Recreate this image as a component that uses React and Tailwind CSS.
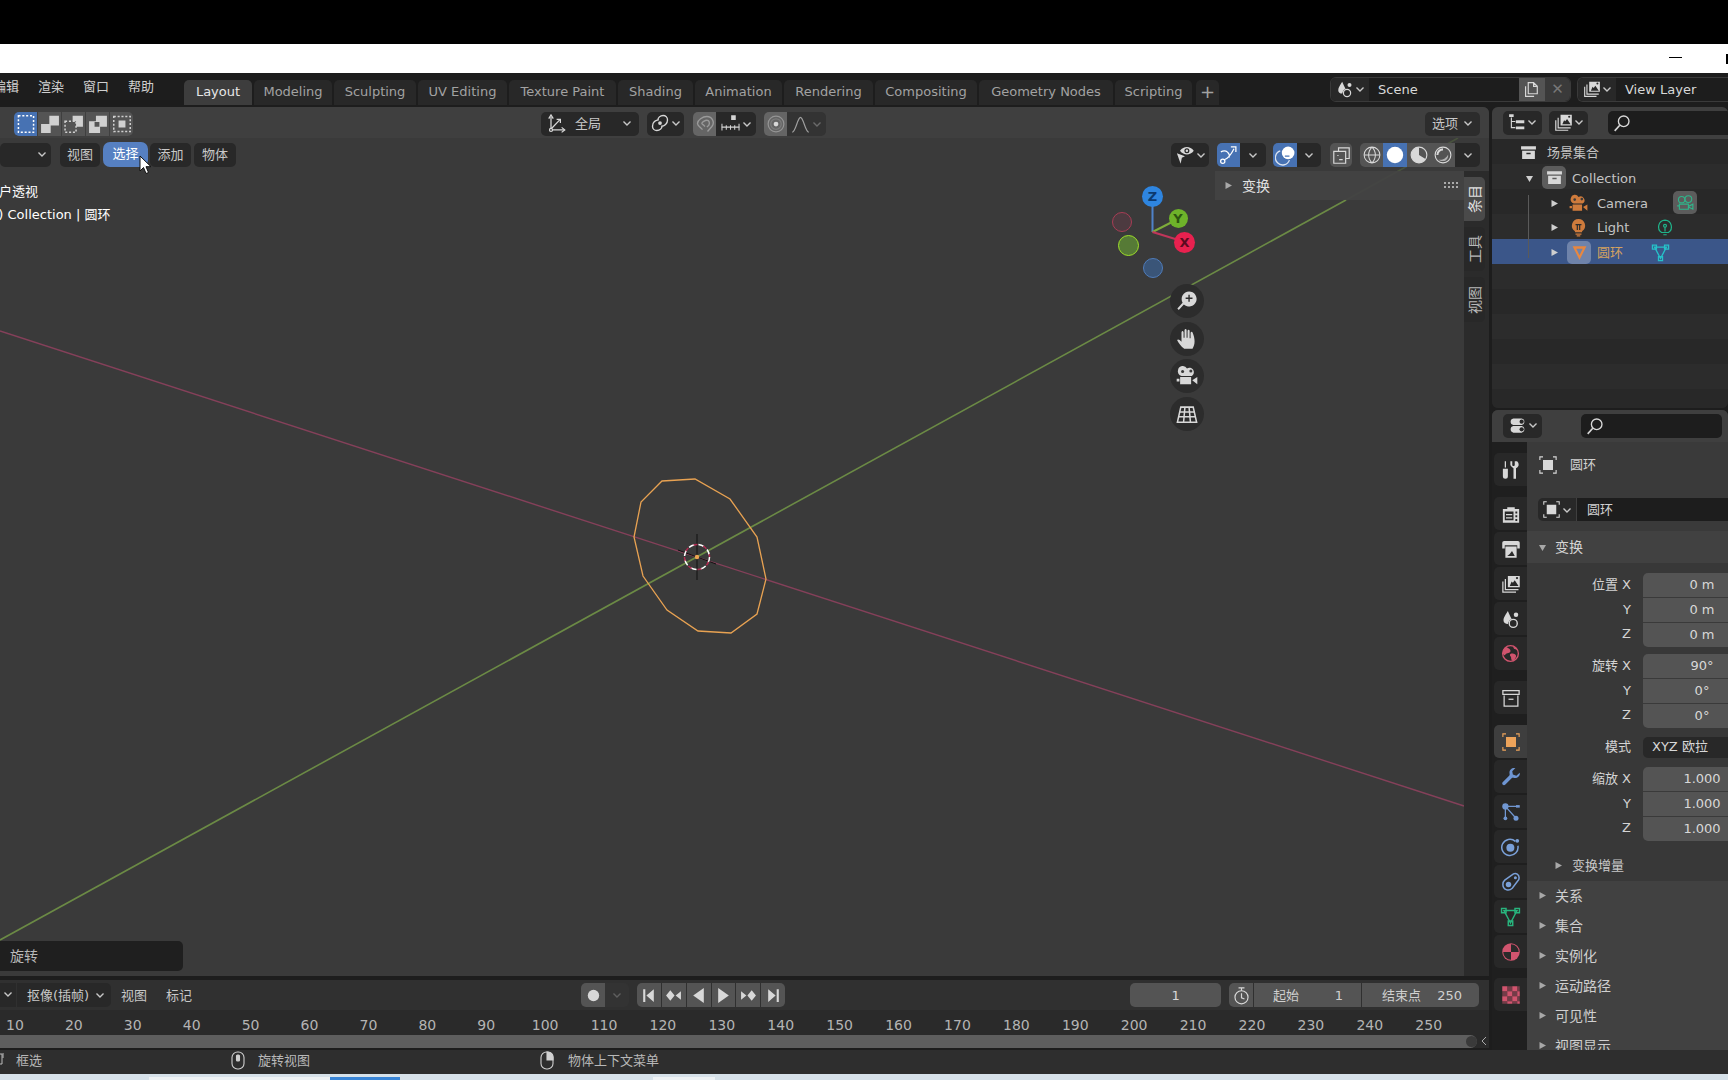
import React from "react";

const Chev = ({ className = "text-[#c8c8c8]" }) => (
  <svg width="10" height="10" viewBox="0 0 10 10" className={`shrink-0 ${className}`} fill="none" stroke="currentColor" strokeWidth="1.400">
    <path d="M1.500 3.500 5 7l3.500-3.500" />
  </svg>
);

const Tri = ({ down, className = "text-[#a8a8a8]" }) => (
  <svg width="9" height="9" viewBox="0 0 9 9" className={`shrink-0 ${className}`} fill="currentColor">
    {down ? <path d="M1 2h7L4.500 8z" /> : <path d="M1.500 1 8 4.500 1.500 8z" />}
  </svg>
);

const Ico = ({ size = 18, className = "text-[#d8d8d8]", children }) => (
  <svg width={size} height={size} viewBox="0 0 16 16" className={`shrink-0 ${className}`} fill="currentColor">
    {children}
  </svg>
);

const Search = ({ size = 18 }) => (
  <Ico size={size}>
    <circle cx="9.500" cy="6.500" r="4.700" fill="none" stroke="currentColor" strokeWidth="1.200" />
    <path d="M6 10 1.500 15" stroke="currentColor" strokeWidth="1.400" />
  </Ico>
);

const SceneIcon = ({ size = 18 }) => (
  <Ico size={size}>
    <path d="M5.500 1.500C3.500 5 2 6.500 2 9c0 2 1.500 3 3.500 3 .5-2 1.500-3.500 3-4C7.500 6 6.500 4 5.500 1.500z" />
    <circle cx="12" cy="4.500" r="1.800" />
    <circle cx="9.800" cy="11.500" r="3.200" fill="none" stroke="currentColor" strokeWidth="1.100" />
  </Ico>
);

const LayerIcon = ({ size = 18 }) => (
  <Ico size={size}>
    <path d="M1.500 6v8.500H12" fill="none" stroke="currentColor" />
    <path d="M3.500 4v8.500H14" fill="none" stroke="currentColor" />
    <path d="M5.500 1.500H15v9H5.500zM7 9.500h7L11 5l-1.500 2L8.500 6z" fillRule="evenodd" />
    <circle cx="12.800" cy="3.200" r="0.900" fill="#282828" />
  </Ico>
);

const OutlinerMode = () => (
  <Ico size={18}>
    <path d="M1 1h4v2.500H1zM7 6.500h7.500V9H7zM7 12h7.500v2.500H7z" />
    <path d="M3 4v9h3.500M3 7.500h3.500" fill="none" stroke="currentColor" />
  </Ico>
);

const Box = ({ size = 18, className }) => (
  <Ico size={size} className={className ?? "text-[#d8d8d8]"}>
    <path d="M1 2h14v3.200H1zM2 6.300h12V14H2zM6 8.300v1.400h4V8.300z" fillRule="evenodd" />
  </Ico>
);

const CameraIcon = ({ size = 18, className, outline }) => (
  <Ico size={size} className={className}>
    {outline ? (
      <g fill="none" stroke="currentColor">
        <circle cx="5" cy="5" r="2.800" />
        <circle cx="11" cy="4.500" r="3" />
        <path d="M3 9h8v4.500H3zM11 11l4-2v4.500l-4-2M1 10.500h2" />
      </g>
    ) : (
      <g>
        <path d="M1.500 3.500a3.500 3.500 0 0 1 6.500-1 3.200 3.200 0 1 1 3.500 5.500H4A3.500 3.500 0 0 1 1.500 3.500z" />
        <path d="M3 8.800h8v5.200H3zM11.800 11l3.700-2.200v5.200zM.5 10h2v2h-2z" />
        <circle cx="4.800" cy="4.700" r="1.100" fill="#3a3a3a" />
        <circle cx="10.800" cy="4.300" r="1.100" fill="#3a3a3a" />
      </g>
    )}
  </Ico>
);

const LightIcon = ({ size = 18, className }) => (
  <Ico size={size} className={className}>
    <path d="M8 .8a5.600 5.600 0 0 1 3 10.300V12H5v-.9A5.600 5.600 0 0 1 8 .8zM5.500 13h5v1h-5zM6.500 14.600h3v1h-3z" />
    <path d="M5.500 5.500h5M7 5.500V10M9 5.500V10" stroke="#2a2a2a" fill="none" />
  </Ico>
);

const MeshIcon = ({ size = 18, className }) => (
  <Ico size={size} className={className}>
    <g fill="none" stroke="currentColor" strokeWidth="1.100">
      <path d="M3 3.500h10L8 13z" />
      <path d="M1.200 1.800h3.400v3.400H1.200zM11.400 1.800h3.400v3.400h-3.400zM6.300 11.400h3.400v3.400H6.300z" />
    </g>
  </Ico>
);

const ObjectFrame = ({ size = 20, className = "text-[#d8d8d8]" }) => (
  <Ico size={size} className={className}>
    <path d="M4 4h8v8H4z" />
    <path d="M4 1.500H1.500V4M12 1.500h2.500V4M4 14.500H1.500V12M12 14.500h2.500V12" fill="none" stroke="currentColor" strokeWidth="0.900" />
  </Ico>
);

const GroupBtn = ({ active, dim, light, className = "", children }) => (
  <div className={`flex items-center justify-center h-full ${active ? "bg-[#4772b3]" : dim ? "bg-[#282828]" : light ? "bg-[#656565]" : "bg-[#545454]"} ${className}`}>{children}</div>
);

const Tab = ({ className, active, children }) => (
  <div className={`h-full shrink-0 flex items-center justify-center rounded-t-[5px] pb-[2px] ${active ? "bg-[#3d3d3d] text-[#e6e6e6]" : "bg-[#282828] text-[#a2a2a2]"} ${className}`}>{children}</div>
);

const Dd = ({ className = "", tone = "bg-[#282828] text-[#c8c8c8]", children }) => (
  <div className={`h-[24px] shrink-0 rounded-[5px] flex items-center pb-[2px] ${tone} ${className}`}>{children}</div>
);

const TopBar = () => (
  <div className="h-[34px] shrink-0 bg-[#1d1d1d] flex items-center overflow-hidden">
    <div className="flex shrink-0 -ml-[7px] w-[191px] gap-[19px] text-[#d0d0d0] -mt-[7px]">
      <span>编辑</span>
      <span>渲染</span>
      <span>窗口</span>
      <span>帮助</span>
    </div>
    <div className="flex gap-[2px] h-[25px] mt-[7px] self-start shrink-0">
      <Tab active className="w-[68px]">Layout</Tab>
      <Tab className="w-[78px]">Modeling</Tab>
      <Tab className="w-[82px]">Sculpting</Tab>
      <Tab className="w-[89px]">UV Editing</Tab>
      <Tab className="w-[107px]">Texture Paint</Tab>
      <Tab className="w-[75px]">Shading</Tab>
      <Tab className="w-[87px]">Animation</Tab>
      <Tab className="w-[89px]">Rendering</Tab>
      <Tab className="w-[102px]">Compositing</Tab>
      <Tab className="w-[134px]">Geometry Nodes</Tab>
      <Tab className="w-[77px]">Scripting</Tab>
      <Tab className="w-[23px] ml-[2px] text-[18px]">+</Tab>
    </div>
    <div className="ml-[111px] flex h-[25px] shrink-0 -mt-[2px] rounded-[6px] overflow-hidden border border-[#3a3a3a]">
      <div className="w-[38px] bg-[#282828] flex items-center justify-center gap-[1px]">
        <SceneIcon size={18} />
        <Chev />
      </div>
      <div className="w-[150px] bg-[#1d1d1d] text-[#d8d8d8] flex items-center pl-[9px]">Scene</div>
      <div className="w-[26px] bg-[#545454] flex items-center justify-center">
        <Ico size={17}>
          <path d="M4 1.500h5l3.500 3.500v7H4zM9 1.500V5h3.500M1.500 5v9.500h8" fill="none" stroke="currentColor" strokeWidth="1.100" />
        </Ico>
      </div>
      <div className="w-[25px] bg-[#3a3a3a] flex items-center justify-center text-[#777] text-[15px]">✕</div>
    </div>
    <div className="ml-[6px] flex h-[25px] shrink-0 -mt-[2px] rounded-l-[6px] overflow-hidden border border-[#3a3a3a] border-r-0">
      <div className="w-[38px] bg-[#282828] flex items-center justify-center gap-[1px]">
        <LayerIcon size={18} />
        <Chev />
      </div>
      <div className="w-[116px] bg-[#1d1d1d] text-[#d8d8d8] flex items-center pl-[9px]">View Layer</div>
    </div>
  </div>
);

const Dotted = ({ x = 3, y = 2, w = 10, h = 12 }) => (
  <rect x={x} y={y} width={w} height={h} fill="none" stroke="currentColor" strokeWidth="1.100" strokeDasharray="1.500 1.300" />
);

const ViewportHeader = () => (
  <div className="h-[31px] shrink-0 bg-[#3f3f3f] flex items-start pt-[5px]">
    <div className="ml-[14px] flex w-[119px] h-[24px] rounded-[5px] overflow-hidden gap-px bg-[#3f3f3f] shrink-0">
      <GroupBtn active className="flex-1">
        <Ico size={22} className="text-white"><Dotted x={2.500} y={2} w={11} h={12} /></Ico>
      </GroupBtn>
      <GroupBtn className="flex-1">
        <Ico size={22} className="text-[#d0d0d0]"><path d="M1.500 8h6V2h7v7h-6v5.500h-7z" /></Ico>
      </GroupBtn>
      <GroupBtn className="flex-1">
        <Ico size={22} className="text-[#d0d0d0]"><Dotted x={1.500} y={6} w={8} h={8} /><path d="M7 2h7.500v8H9.500V6H7z" /></Ico>
      </GroupBtn>
      <GroupBtn className="flex-1">
        <Ico size={22} className="text-[#d0d0d0]"><path d="M6.500 2h8v8h-5v4.500h-8V6h5zM5.500 6.500v3.500h3.500V6.500z" fillRule="evenodd" /></Ico>
      </GroupBtn>
      <GroupBtn className="flex-1">
        <Ico size={22} className="text-[#d0d0d0]"><Dotted x={2} y={2.500} w={12} h={11} /><path d="M5.500 5.500h5v5h-5z" /></Ico>
      </GroupBtn>
    </div>
    <Dd className="ml-[408px] w-[98px] pl-[5px] pr-[7px]">
      <Ico size={20}>
        <g fill="none" stroke="currentColor" strokeWidth="1">
          <path d="M4 3v9.500M5.200 13.500H14.500M4.800 12 11 5.500" />
          <path d="M2.200 4.500 4 1.500l1.800 3M12.500 11.500l2.500 2-2.500 2M8.500 5h3v3" />
          <circle cx="4" cy="13.500" r="1.200" />
        </g>
      </Ico>
      <span className="ml-[9px]">全局</span>
      <span className="ml-auto"><Chev /></span>
    </Dd>
    <Dd className="ml-[8px] w-[37px] justify-center gap-[1px]">
      <Ico size={20}>
        <g fill="none" stroke="currentColor" strokeWidth="1.100">
          <path d="M7 5.500C4.500 5.500 2 7.500 2 10.500c0 2 1.500 3.500 3.500 3.500 2.500 0 4-2 4.200-3.500" />
          <path d="M9 10.500c2.500 0 5-2 5-5 0-2-1.500-3.500-3.500-3.500C8 2 6.500 4 6.300 5.500" />
        </g>
        <circle cx="8" cy="8" r="1.500" />
      </Ico>
      <Chev />
    </Dd>
    <div className="ml-[9px] flex w-[63px] h-[24px] rounded-[5px] overflow-hidden shrink-0">
      <GroupBtn light className="w-[23px]">
        <Ico size={20} className="text-[#9a9a9a]">
          <g fill="none" stroke="currentColor" strokeWidth="1.100">
            <path d="M10 14 13.500 10C16 7 14 2 9.500 2 6 2 2 5 2 7.500 2 9 3 9.500 4.500 11L6 12.500" />
            <path d="M9.500 10.500 11 9C12 7.500 11.500 5 9.500 5 8 5 5.500 6.500 5.500 7.500c0 .5 1 1 1.500 1.500L8 10" />
          </g>
        </Ico>
      </GroupBtn>
      <GroupBtn dim className="flex-1 gap-[1px]">
        <Ico size={21} className="text-[#d4d4d4]">
          <path d="M8.500 1h3.500v3.500H8.500z" />
          <path d="M1 10h14M1.500 7.500v5M4.800 8.500v3.500M8 8.500v3.500M11.200 8.500v3.500M14.500 7.500v5" fill="none" stroke="currentColor" strokeWidth="0.800" />
        </Ico>
        <Chev />
      </GroupBtn>
    </div>
    <div className="ml-[8px] flex w-[62px] h-[24px] rounded-[5px] overflow-hidden shrink-0">
      <GroupBtn light className="w-[23px]">
        <Ico size={20} className="text-[#a8a8a8]">
          <circle cx="8" cy="8" r="6.300" fill="none" stroke="currentColor" strokeOpacity="0.700" />
          <circle cx="8" cy="8" r="4.200" fill="none" stroke="currentColor" strokeOpacity="0.350" />
          <circle cx="8" cy="8" r="1.900" className="text-[#d8d8d8]" />
        </Ico>
      </GroupBtn>
      <div className="flex-1 bg-[#333333] flex items-center justify-center gap-[2px]">
        <Ico size={19} className="text-[#a0a0a0]">
          <path d="M1 14.500C4 14.500 5.500 2 8 2s4 12.500 7 12.500" fill="none" stroke="currentColor" strokeWidth="1" />
        </Ico>
        <Chev className="text-[#6a6a6a]" />
      </div>
    </div>
    <Dd tone="bg-[#2c2c2c] text-[#c8c8c8]" className="ml-auto mr-[9px] w-[55px] justify-center gap-[5px]">
      <span>选项</span>
      <Chev />
    </Dd>
  </div>
);

const ViewportTools = () => (
  <div className="h-[33px] relative flex items-start pt-[5px] shrink-0">
    <Dd className="w-[51px] justify-end pr-[4px]"><Chev /></Dd>
    <Dd className="ml-[9px] w-[40px] justify-center">视图</Dd>
    <Dd tone="bg-[#5680c2] text-white" className="ml-[3px] w-[45px] justify-center h-[25px] -mt-[1px] rounded-[7px]">选择</Dd>
    <Dd className="ml-[2px] w-[41px] justify-center">添加</Dd>
    <Dd className="ml-[3px] w-[42px] justify-center">物体</Dd>
    <div className="ml-auto mr-[9px] flex items-start h-[24px] shrink-0">
      <div className="w-[38px] h-[24px] rounded-[5px] bg-[#282828] flex items-center justify-center gap-[1px]">
        <Ico size={20}>
          <path d="M1.500 6.500 8 9 5.500 10.200 4.500 15z" />
          <path d="M4 4.500C5.500 2.500 7.500 1.500 9.500 1.500s4 1 5.500 3c-1.500 2-3.500 3-5.500 3S5.500 6.500 4 4.500z" />
          <circle cx="9.500" cy="4.500" r="2" fill="#282828" />
          <circle cx="9.500" cy="4.500" r="1" />
        </Ico>
        <Chev />
      </div>
      <div className="ml-[8px] flex w-[49px] h-[24px] rounded-[5px] overflow-hidden">
        <GroupBtn active className="w-[23px]">
          <Ico size={20} className="text-white">
            <g fill="none" stroke="currentColor" strokeWidth="1">
              <circle cx="3" cy="13" r="1.700" />
              <path d="M4.200 11.800C7 11 10 7 12 3M1.500 5.500C6 3 9 7 8 10M9.500 1.500h4v4" />
            </g>
          </Ico>
        </GroupBtn>
        <GroupBtn dim className="flex-1"><Chev /></GroupBtn>
      </div>
      <div className="ml-[7px] flex w-[48px] h-[24px] rounded-[5px] overflow-hidden">
        <GroupBtn active className="w-[24px]">
          <Ico size={21} className="text-white">
            <path d="M4 4.500a5.500 5.500 0 1 0 7 7" fill="none" stroke="currentColor" strokeWidth="1" strokeOpacity="0.800" />
            <circle cx="10" cy="6" r="4.800" />
            <path d="M7.500 8.500h3.500" stroke="#4772b3" fill="none" />
          </Ico>
        </GroupBtn>
        <GroupBtn dim className="flex-1"><Chev /></GroupBtn>
      </div>
      <div className="ml-[9px] w-[22px] h-[24px] rounded-[5px] bg-[#545454] flex items-center justify-center">
        <Ico size={19}>
          <path d="M5.500 4.500V1.500H14.500V10.500H11.500M1.500 4.500h10v10h-10z" fill="none" stroke="currentColor" />
          <path d="M4.500 7.500h1v1h-1zM6 11h3v1H6z" />
        </Ico>
      </div>
      <div className="ml-[8px] flex w-[120px] h-[24px] rounded-[5px] overflow-hidden">
        <GroupBtn className="w-[23px]">
          <Ico size={18}>
            <g fill="none" stroke="currentColor" strokeWidth="0.900">
              <circle cx="8" cy="8" r="7" />
              <path d="M1 8h14M8 1c-4 4-4 10 0 14M8 1c4 4 4 10 0 14" />
            </g>
          </Ico>
        </GroupBtn>
        <GroupBtn active className="w-[24px]">
          <Ico size={18} className="text-white"><circle cx="8" cy="8" r="7.300" /></Ico>
        </GroupBtn>
        <GroupBtn className="w-[24px]">
          <Ico size={18}>
            <circle cx="8" cy="8" r="7" fill="none" stroke="currentColor" />
            <path d="M8 1v7l5.800 3.500A7 7 0 0 1 8 15 7 7 0 0 1 8 1z" />
          </Ico>
        </GroupBtn>
        <GroupBtn className="w-[24px]">
          <Ico size={18}>
            <circle cx="8" cy="8" r="7" fill="none" stroke="currentColor" />
            <path d="M3 8a5 5 0 0 1 5-5" fill="none" stroke="currentColor" strokeWidth="1.800" />
            <path d="M4 12c3 1 7-1 8.500-4.500.5 2-.5 4.500-2.500 5.500-2 .8-4.500.5-6-1z" fillOpacity="0.700" />
          </Ico>
        </GroupBtn>
        <GroupBtn dim className="flex-1"><Chev /></GroupBtn>
      </div>
    </div>
  </div>
);

const Dot = ({ className, children }) => (
  <div className={`absolute rounded-full flex items-center justify-center text-[13px] font-bold leading-none ${className}`}>{children}</div>
);

const NavBtn = ({ children }) => (
  <div className="w-[34px] h-[34px] rounded-full bg-[#2c2c2c] flex items-center justify-center">{children}</div>
);

const SideTab = ({ active, className = "", children }) => (
  <div className={`w-[21px] rounded-r-[5px] flex items-center justify-center text-[14px] ${active ? "bg-[#4a4a4a] text-[#e0e0e0]" : "bg-[#282828] text-[#b8b8b8]"} ${className}`}>
    <span className="-rotate-90 whitespace-nowrap">{children}</span>
  </div>
);

const Scene3D = () => (
  <svg className="absolute left-0 top-0" width="1489" height="838" viewBox="0 138 1489 838" fill="none">
    <path d="M0 331 1464 806" stroke="#85405a" strokeWidth="1.400" />
    <path d="M0 940 1346 200" stroke="#6b8a45" strokeWidth="1.600" />
    <path d="M1346 200 1458 138" stroke="#6b8a45" strokeWidth="1.600" strokeOpacity="0.300" />
    <path
      d="M662 481 695 479 730 499 757 537 766 579 757 614 731 633 698 631 667 610 643 576 634 537 641 502Z"
      stroke="#e8a252"
      strokeWidth="1.300"
    />
    <path d="M697 534V580M678 550 716 564" stroke="#111" strokeWidth="1" />
    <circle cx="697" cy="557" r="12.500" stroke="#fff" strokeWidth="1.500" strokeDasharray="6 4" />
    <circle cx="697" cy="557" r="12.500" stroke="#b02a50" strokeWidth="1.500" strokeDasharray="4 6" strokeDashoffset="5" />
    <circle cx="697" cy="557" r="2.200" fill="#eda551" />
  </svg>
);

const Viewport = () => (
  <div className="h-[869px] shrink-0 flex flex-col bg-[#3a3a3a] rounded-tr-[6px] overflow-hidden">
    <ViewportHeader />
    <div className="flex-1 relative flex flex-col overflow-hidden">
      <Scene3D />
      <ViewportTools />
      <svg className="absolute left-[139px] top-[17px]" width="14" height="20" viewBox="0 0 14 20">
        <path d="M1 1v15l3.500-3.500 2.500 6 2.500-1-2.500-5.800h5z" fill="#fff" stroke="#111" strokeWidth="1" />
      </svg>
      <div className="flex-1 flex relative min-h-0">
        <div className="flex-1 relative">
          <div className="mt-[9px] -ml-[14px] text-white text-[13px] leading-[23px]">
            <div>用户透视</div>
            <div className="-ml-[1px]">(1) Collection | 圆环</div>
          </div>
          <div className="absolute left-[1215px] top-0 w-[249px] h-[29px] bg-[#444444]/90 flex items-center pl-[9px] text-[#e0e0e0] text-[14px]">
            <Tri />
            <span className="ml-[9px]">变换</span>
            <svg width="15" height="7" viewBox="0 0 15 7" className="ml-auto mr-[5px] text-[#aaa]" fill="currentColor">
              <path d="M0 0h2v2H0zM4 0h2v2H4zM8 0h2v2H8zM12 0h2v2h-2zM0 4h2v2H0zM4 4h2v2H4zM8 4h2v2H8zM12 4h2v2h-2z" />
            </svg>
          </div>
          <svg className="absolute left-[1110px] top-[13px]" width="90" height="110" viewBox="1110 184 90 110" fill="none">
            <path d="M1152.500 232V200" stroke="#4f82c9" strokeWidth="2" />
            <path d="M1152.500 232 1178 219" stroke="#7eac3a" strokeWidth="2" />
            <path d="M1152.500 232 1185 242" stroke="#c0365a" strokeWidth="2" />
          </svg>
          <Dot className="left-[1142px] top-[14.500px] w-[21px] h-[21px] bg-[#2e85e0] text-[#0c3a70]">Z</Dot>
          <Dot className="left-[1168.500px] top-[37.500px] w-[19px] h-[19px] bg-[#6eb32a] text-[#2c5510]">Y</Dot>
          <Dot className="left-[1174px] top-[60.500px] w-[21px] h-[21px] bg-[#e8214f] text-[#5c0a20]">X</Dot>
          <Dot className="left-[1112px] top-[41px] w-[20px] h-[20px] border-[1.500px] border-[#a83d55] bg-[#4d3a40]" />
          <Dot className="left-[1117.500px] top-[63.500px] w-[21px] h-[21px] border-[1.500px] border-[#9fe02a] bg-[#567a36]" />
          <Dot className="left-[1143px] top-[87px] w-[20px] h-[20px] border-[1.500px] border-[#4f7cba] bg-[#3a5578]" />
          <div className="absolute left-[1170px] top-[113px] flex flex-col gap-[3.500px]">
            <NavBtn>
              <Ico size={22}>
                <path d="M9.500 1a5.500 5.500 0 1 1-3.800 9.500L2 14.500 1 13.500l3.800-4.300A5.500 5.500 0 0 1 9.500 1z" />
                <path d="M9.500 3.500v5M7 6h5" stroke="#2c2c2c" fill="none" />
              </Ico>
            </NavBtn>
            <NavBtn>
              <Ico size={22}>
                <path d="M6 15C3.500 13.500 1.500 10.500.8 8.800c.7-.8 1.700-.3 3.200 1.200V3c.3-1 1.200-1 1.500 0v4h.7V1.500c.3-1 1.300-1 1.500 0V7h.7V2c.3-1 1.300-1 1.500 0v5.500h.7V3.500c.3-1 1.300-1 1.500 0C14 8 14 12 12 15z" />
              </Ico>
            </NavBtn>
            <NavBtn>
              <CameraIcon size={22} className="text-[#d8d8d8]" />
            </NavBtn>
            <NavBtn>
              <Ico size={22}>
                <g fill="none" stroke="currentColor" strokeWidth="1.100">
                  <path d="M3.500 3h9L15 14H1z" />
                  <path d="M2.700 6.500h10.600M1.800 10h12.400M6.500 3l-1 11M9.500 3l1 11" />
                </g>
              </Ico>
            </NavBtn>
          </div>
          <div className="absolute left-0 bottom-[5px] w-[183px] h-[30px] rounded-r-[5px] bg-[#1f1f1f] flex items-center pl-[10px] text-[#b8b8b8] text-[14px]">旋转</div>
        </div>
        <div className="w-[25px] shrink-0 bg-[#2b2b2b] flex flex-col pt-[6px] gap-[6px] items-start">
          <SideTab active className="h-[44px]">条目</SideTab>
          <SideTab className="h-[44px]">工具</SideTab>
          <SideTab className="h-[45px]">视图</SideTab>
        </div>
      </div>
    </div>
  </div>
);

const PlayBtn = ({ children }) => (
  <div className="flex-1 h-full bg-[#545454] flex items-center justify-center">{children}</div>
);

const P = ({ d }) => (
  <Ico size={17}><path d={d} /></Ico>
);

const Timeline = () => (
  <div className="mt-[4px] h-[70px] shrink-0 flex flex-col bg-[#1d1d1d] overflow-hidden">
    <div className="h-[30px] shrink-0 bg-[#303030] flex items-center">
      <Dd className="w-[16px] rounded-none justify-end pr-[3px]"><Chev /></Dd>
      <div className="h-[24px] w-[94px] shrink-0 ml-px rounded-r-[5px] bg-[#282828] flex items-center justify-between pl-[10px] pr-[6px] text-[#c8c8c8] text-[13px]">
        <span>抠像(插帧)</span>
        <Chev />
      </div>
      <span className="ml-[10px] text-[#c8c8c8]">视图</span>
      <span className="ml-[19px] text-[#c8c8c8]">标记</span>
      <div className="ml-[389px] flex w-[48px] h-[24px] rounded-[5px] overflow-hidden shrink-0">
        <GroupBtn className="w-[24px]"><Ico size={13}><circle cx="8" cy="8" r="7" /></Ico></GroupBtn>
        <div className="flex-1 bg-[#333333] flex items-center justify-center"><Chev className="text-[#5f5f5f]" /></div>
      </div>
      <div className="ml-[8px] flex w-[148px] h-[24px] rounded-[5px] overflow-hidden gap-px shrink-0">
        <PlayBtn><P d="M3 2h2v12H3zM13 2v12L6 8z" /></PlayBtn>
        <PlayBtn><P d="M5 3l4 5-4 5-4-5zM15 4v8l-5-4z" /></PlayBtn>
        <PlayBtn><P d="M13 1v14L3 8z" /></PlayBtn>
        <PlayBtn><P d="M3 1v14l10-7z" /></PlayBtn>
        <PlayBtn><P d="M11 3l4 5-4 5-4-5zM1 4v8l5-4z" /></PlayBtn>
        <PlayBtn><P d="M11 2h2v12h-2zM3 2v12l7-6z" /></PlayBtn>
      </div>
      <div className="ml-[345px] w-[91px] h-[24px] rounded-[5px] bg-[#545454] flex items-center justify-center text-[#d8d8d8] shrink-0">1</div>
      <div className="ml-[8px] flex w-[250px] h-[24px] rounded-[5px] overflow-hidden shrink-0 gap-px text-[#d0d0d0]">
        <div className="w-[24px] bg-[#545454] flex items-center justify-center">
          <Ico size={19}>
            <g fill="none" stroke="currentColor">
              <circle cx="8" cy="9.500" r="5.500" />
              <path d="M5.500 1.500h5M8 1.500V4M8 6v4l2.500 1" />
            </g>
          </Ico>
        </div>
        <div className="w-[107px] bg-[#545454] flex items-center justify-between pl-[19px] pr-[18px]"><span>起始</span><span>1</span></div>
        <div className="flex-1 bg-[#545454] flex items-center justify-between pl-[20px] pr-[17px]"><span>结束点</span><span>250</span></div>
      </div>
    </div>
    <div className="h-[24px] shrink-0 bg-[#2a2a2a] grid grid-cols-[repeat(25,58.920px)] -ml-[14.500px] text-[#b4b4b4] text-[14px] items-center text-center pt-[6px]">
      {Array.from({ length: 25 }, (_, i) => (
        <span key={i}>{(i + 1) * 10}</span>
      ))}
    </div>
    <div className="h-[14px] shrink-0 bg-[#2a2a2a] flex items-center">
      <div className="h-[13px] w-[1477px] bg-[#5e5e5e] rounded-r-full flex justify-end items-center">
        <div className="w-[11px] h-[11px] rounded-full bg-[#3a3a3a]" />
      </div>
      <svg width="8" height="12" viewBox="0 0 8 12" className="ml-[3px] text-[#aaa]" fill="none" stroke="currentColor"><path d="M6 2 2 6l4 4" /></svg>
    </div>
  </div>
);

const Row = ({ className = "", children }) => (
  <div className={`h-[25px] shrink-0 flex items-center relative ${className}`}>{children}</div>
);

const IconChip = ({ className = "", children }) => (
  <div className={`absolute w-[24px] h-[23px] top-[2px] rounded-[5px] flex items-center justify-center ${className}`}>{children}</div>
);

const Outliner = () => (
  <div className="h-[301px] shrink-0 flex flex-col bg-[#282828] rounded-[6px] overflow-hidden">
    <div className="h-[32px] shrink-0 bg-[#3f3f3f] flex items-center pl-[11px] gap-[7px]">
      <Dd className="w-[39px] justify-center gap-[1px]"><OutlinerMode /><Chev /></Dd>
      <Dd className="w-[39px] justify-center gap-[1px]"><LayerIcon size={19} /><Chev /></Dd>
      <div className="ml-[13px] flex-1 h-[24px] rounded-l-[5px] bg-[#1d1d1d] flex items-center pl-[5px]"><Search /></div>
    </div>
    <div className="flex-1 flex flex-col relative text-[#c4c4c4] overflow-hidden">
      <Row className="bg-[#282828] pl-[28px] pt-[2px]"><Box size={17} /><span className="ml-[10px]">场景集合</span></Row>
      <Row className="bg-[#2c2c2c] pl-[33px] pt-[3px]">
        <Tri down className="text-[#cfcfcf]" />
        <IconChip className="left-[50px] bg-[#5c5c5c]"><Box size={17} /></IconChip>
        <span className="absolute left-[80px]">Collection</span>
      </Row>
      <Row className="bg-[#282828] pl-[58px] pt-[3px]">
        <Tri className="text-[#cfcfcf]" />
        <CameraIcon size={19} className="absolute left-[77px] text-[#cf7b3c]" />
        <span className="absolute left-[105px]">Camera</span>
        <IconChip className="left-[181px] bg-[#5c5c5c]"><CameraIcon size={18} outline className="text-[#2fb58a]" /></IconChip>
      </Row>
      <Row className="bg-[#2c2c2c] pl-[58px] pt-[2px]">
        <Tri className="text-[#cfcfcf]" />
        <LightIcon size={19} className="absolute left-[77px] text-[#cf7b3c]" />
        <span className="absolute left-[105px]">Light</span>
        <svg width="18" height="18" viewBox="0 0 16 16" className="absolute left-[164px] text-[#1fb38a]" fill="none" stroke="currentColor" strokeWidth="1.100">
          <path d="M8 1a6 6 0 0 1 3 11H5A6 6 0 0 1 8 1zM6.500 14h3" />
          <circle cx="8" cy="6" r="1.300" />
          <path d="M8 7v4" />
        </svg>
      </Row>
      <Row className="bg-[#3b5689] pl-[58px] pt-[2px]">
        <Tri className="text-[#cfcfcf]" />
        <IconChip className="left-[75px] top-[1px] bg-[#6f83aa]">
          <Ico size={17} className="text-[#e8873f]"><path d="M1.500 2h13L8 15zM5 4.500 8 10.500l3-6z" fillRule="evenodd" /></Ico>
        </IconChip>
        <span className="absolute left-[105px] text-[#d2a160]">圆环</span>
        <MeshIcon size={19} className="absolute left-[159px] text-[#26c1c9]" />
      </Row>
      {[0, 1, 2, 3, 4, 5].map((i) => (
        <Row key={i} className={i % 2 ? "bg-[#282828]" : "bg-[#2c2c2c]"} />
      ))}
      <div className="absolute left-[36px] top-[56px] w-px h-[63px] bg-[#5a5a5a]" />
    </div>
  </div>
);

const NavIcon = ({ active, className = "", children }) => (
  <div className={`w-[33px] h-[33px] ml-[2px] flex items-center justify-center rounded-l-[5px] ${active ? "bg-[#3e3e3e]" : "bg-[#282828]"} ${className}`}>{children}</div>
);

const PropNav = () => (
  <div className="w-[35px] shrink-0 bg-[#1f1f1f] flex flex-col pt-[11px]">
    <NavIcon>
      <Ico size={20}>
        <path d="M3 1h1v5H3zM1.500 7H5.500v6A2 2 0 0 1 1.500 13zM7.500 1h1.500v3c0 1 2 1 2 0V1h1.500c1 0 2 2 1.500 3.500-.5 1-1 1.500-2 2V15h-2V6.500c-1-.5-2-1.500-2.500-2.500z" />
      </Ico>
    </NavIcon>
    <NavIcon className="mt-[11px]">
      <Ico size={20}>
        <path d="M5 2.500h6V4h3.500v11h-13V4H5zM3 6v7h7V6zM11.500 6v1.500H13V6zM11.500 9v1.500H13V9zM11.500 12v1.500H13V12z" fillRule="evenodd" />
        <path d="M4 8h5v1H4zM4 10.500h5v1H4z" />
      </Ico>
    </NavIcon>
    <NavIcon className="mt-[2px]">
      <Ico size={20}>
        <path d="M1 3a1.500 1.500 0 0 1 1.500-1.500h11A1.500 1.500 0 0 1 15 3v4.500h-2V5H3v2.500H1zM3.500 6h9v9h-9zM5 13.500h6L8.800 9.500 7 12z" fillRule="evenodd" />
      </Ico>
    </NavIcon>
    <NavIcon className="mt-[2px]"><LayerIcon size={20} /></NavIcon>
    <NavIcon className="mt-[2px]"><SceneIcon size={20} /></NavIcon>
    <NavIcon className="mt-[2px]">
      <Ico size={21} className="text-[#d1546e]">
        <circle cx="8" cy="8" r="6" fill="none" stroke="currentColor" />
        <path d="M5 3c1 1 3 1 3 3s-3 1-4 3c-1 1-1.500-1-2-1 0-2 1-4 3-5zM9 8c2 0 4 1 3 3s-2 3-3 2 0-2-1-3 0-2 1-2zM10 2.500c1 .5 2 1 3 2.500-2 0-3-1-3-2.500z" />
      </Ico>
    </NavIcon>
    <NavIcon className="mt-[11px]">
      <Ico size={20}>
        <path d="M1.500 2h13v3h-13zM2.500 6v8.500h11V6" fill="none" stroke="currentColor" />
        <path d="M6 8.500h4v1H6z" />
      </Ico>
    </NavIcon>
    <NavIcon active className="mt-[11px]"><ObjectFrame className="text-[#eda35a]" /></NavIcon>
    <NavIcon className="mt-[2px]">
      <Ico size={20} className="text-[#6e95d2]">
        <path d="M15 4.500 12.300 7 9.500 6 9 3.300 11.500.8C9 .3 6.500 2 6.800 5 7 6 7 6.500 6.500 7L1.500 12c-1.500 1.500.5 3.500 2 2L8.500 9c.5-.5 1-.5 2-.3 3 .5 5-2 4.500-4.200z" />
      </Ico>
    </NavIcon>
    <NavIcon className="mt-[2px]">
      <Ico size={20} className="text-[#7197d2]">
        <circle cx="3.500" cy="3.500" r="2.500" />
        <circle cx="12" cy="13" r="2" />
        <circle cx="3.500" cy="13" r="1.500" />
        <path d="M3.500 3.500v9.500M3.500 3.500l8.500 9.500M3.500 3.500H14" stroke="currentColor" fill="none" />
        <rect x="12" y="2.500" width="3" height="2" />
      </Ico>
    </NavIcon>
    <NavIcon className="mt-[2px]">
      <Ico size={20} className="text-[#7aa0d8]">
        <circle cx="7.500" cy="8.500" r="3.200" />
        <path d="M11.500 3.500A6.500 6.500 0 1 0 13.500 7" fill="none" stroke="currentColor" strokeWidth="1.200" />
        <circle cx="13" cy="3" r="1.500" />
      </Ico>
    </NavIcon>
    <NavIcon className="mt-[2px]">
      <Ico size={20} className="text-[#7aa0d8]">
        <path d="M1.500 10a4.500 4.500 0 0 1 1.500-3.500L10 1.500c2-1 4.500.5 4.500 3 0 1-.5 2-1 2.500L9 13c-3 3-7.500 1-7.500-3z" fill="none" stroke="currentColor" strokeWidth="1.200" />
        <circle cx="6" cy="10" r="2.200" />
        <circle cx="11.500" cy="4.500" r="1.200" />
      </Ico>
    </NavIcon>
    <NavIcon className="mt-[2px]"><MeshIcon size={21} className="text-[#28b47d]" /></NavIcon>
    <NavIcon className="mt-[2px]">
      <Ico size={20} className="text-[#d1546e]">
        <circle cx="8" cy="8" r="7" />
        <path d="M8 1.800a6.200 6.200 0 0 1 6.200 6.200H8zM8 8H1.800A6.200 6.200 0 0 0 8 14.200z" fill="#2a2a2a" />
      </Ico>
    </NavIcon>
    <NavIcon className="mt-[10px]">
      <Ico size={20} className="text-[#d1546e]">
        <path d="M1 1h4v4H1zM9 1h4v4H9zM5 5h4v4H5zM13 5h2v4h-2zM1 9h4v4H1zM9 9h4v4H9zM5 13h4v2H5zM13 13h2v2h-2z" />
        <path d="M5 1h4v4H5zM13 1h2v4h-2zM1 5h4v4H1zM9 5h4v4H9zM5 9h4v4H5zM13 9h2v4h-2zM1 13h4v2H1zM9 13h4v2H9z" fillOpacity="0.450" />
      </Ico>
    </NavIcon>
  </div>
);

const FieldGroup = ({ label, vals, className = "" }) => (
  <div className={`flex ${className}`}>
    <div className="w-[104px] shrink-0 flex flex-col text-right text-[#d4d4d4]">
      {vals.map((_, i) => (
        <div key={i} className="flex-1 flex items-center justify-end pb-[2px]">
          {i === 0 ? label : ["Y", "Z"][i - 1]}
        </div>
      ))}
    </div>
    <div className="ml-[12px] w-[118px] shrink-0 h-[74px] rounded-[5px] overflow-hidden flex flex-col gap-px bg-[#3a3a3a]">
      {vals.map((v, i) => (
        <div key={i} className="flex-1 bg-[#545454] flex items-center justify-center pb-[2px] text-[#d8d8d8]">{v}</div>
      ))}
    </div>
  </div>
);

const PanelHead = ({ children }) => (
  <div className="h-[30px] shrink-0 bg-[#414141] flex items-center pl-[11px] pb-[1px] text-[#cfcfcf] text-[14px]">
    <Tri />
    <span className="ml-[8px]">{children}</span>
  </div>
);

const Props = () => (
  <div className="mt-[2px] flex-1 min-h-0 flex flex-col bg-[#3a3a3a] rounded-t-[6px] overflow-hidden">
    <div className="h-[32px] shrink-0 bg-[#3f3f3f] flex items-center pl-[11px]">
      <Dd className="w-[39px] justify-center gap-[1px] h-[23px]">
        <Ico size={19}>
          <path d="M4.500 2h7a2.800 2.800 0 0 1 0 5.500h-7a2.800 2.800 0 0 1 0-5.500zM4.500 8.500h7a2.800 2.800 0 0 1 0 5.500h-7a2.800 2.800 0 0 1 0-5.500z" />
          <circle cx="11.500" cy="4.800" r="1.800" fill="#282828" />
          <circle cx="11.500" cy="11.200" r="1.800" fill="#282828" />
        </Ico>
        <Chev />
      </Dd>
      <div className="ml-[39px] w-[141px] h-[24px] rounded-[5px] bg-[#1d1d1d] flex items-center pl-[5px]"><Search /></div>
    </div>
    <div className="flex-1 min-h-0 flex">
      <PropNav />
      <div className="flex-1 min-w-0 flex flex-col overflow-hidden text-[13px]">
        <div className="h-[45px] shrink-0 flex items-center pl-[11px] text-[#d0d0d0]">
          <ObjectFrame />
          <span className="ml-[12px]">圆环</span>
        </div>
        <div className="mt-[11px] ml-[11px] h-[23px] shrink-0 flex rounded-l-[5px] overflow-hidden">
          <div className="w-[39px] bg-[#282828] flex items-center justify-center gap-[1px] border-r border-[#3f3f3f]">
            <ObjectFrame size={19} />
            <Chev />
          </div>
          <div className="flex-1 bg-[#1d1d1d] text-[#d0d0d0] flex items-center pl-[10px]">圆环</div>
        </div>
        <div className="mt-[10px] h-[32px] shrink-0 bg-[#414141] flex items-center pl-[11px] text-[#d4d4d4] text-[14px]">
          <Tri down />
          <span className="ml-[8px]">变换</span>
        </div>
        <div className="shrink-0 bg-[#383838] pt-[10px] pb-[4px] h-[318px]">
          <FieldGroup label="位置 X" vals={["0 m", "0 m", "0 m"]} />
          <FieldGroup label="旋转 X" vals={["90°", "0°", "0°"]} className="mt-[7px]" />
          <div className="mt-[9px] flex h-[21px]">
            <div className="w-[104px] shrink-0 flex items-center justify-end pb-[2px] text-[#d4d4d4]">模式</div>
            <div className="ml-[12px] w-[118px] shrink-0 rounded-l-[5px] bg-[#282828] text-[#d8d8d8] pl-[9px] pb-[2px] flex items-center">XYZ 欧拉</div>
          </div>
          <FieldGroup label="缩放 X" vals={["1.000", "1.000", "1.000"]} className="mt-[9px]" />
          <div className="mt-[12px] h-[24px] flex items-center pl-[27px] text-[#c8c8c8]">
            <Tri />
            <span className="ml-[9px]">变换增量</span>
          </div>
        </div>
        <PanelHead>关系</PanelHead>
        <PanelHead>集合</PanelHead>
        <PanelHead>实例化</PanelHead>
        <PanelHead>运动路径</PanelHead>
        <PanelHead>可见性</PanelHead>
        <PanelHead>视图显示</PanelHead>
      </div>
    </div>
  </div>
);

const Mouse = ({ kind }) => (
  <svg width="16" height="19" viewBox="0 0 16 19" fill="none" stroke="#d0d0d0" strokeWidth="1.100" className="shrink-0">
    <rect x="2" y="1" width="12" height="17" rx="5.500" />
    {kind === "mid" && <rect x="6.500" y="4" width="3" height="6" rx="1" fill="#d0d0d0" />}
    {kind === "right" && <path d="M8 1h1a5 5 0 0 1 5 5v3H8z" fill="#d0d0d0" />}
  </svg>
);

const StatusBar = () => (
  <div className="h-[24px] shrink-0 bg-[#2e2e2e] flex items-center pb-[3px] text-[#b8b8b8] text-[13px]">
    <svg width="8" height="19" viewBox="0 0 8 19" fill="none" stroke="#bbb" className="shrink-0 -ml-[2px]"><path d="M0 3h4v10H0M5 2v5" /></svg>
    <span className="ml-[10px] w-[26px] shrink-0">框选</span>
    <div className="ml-[188px]"><Mouse kind="mid" /></div>
    <span className="ml-[12px]">旋转视图</span>
    <div className="ml-[229px]"><Mouse kind="right" /></div>
    <span className="ml-[13px]">物体上下文菜单</span>
  </div>
);

const TaskStrip = () => (
  <div className="h-[6px] shrink-0 bg-[#d7e2ea] flex items-end">
    <div className="ml-[149px] w-[181px] h-[3px] bg-[#eef2f5]" />
    <div className="w-[70px] h-[3px] bg-[#3a86d8]" />
    <div className="ml-[253px] w-[62px] h-[3px] bg-[#eef2f5]" />
  </div>
);

export default function App() {
  return (
    <div className="w-[1728px] h-[1080px] overflow-hidden flex flex-col bg-[#1d1d1d] text-[13px] leading-none font-['DejaVu_Sans','Noto_Sans_CJK_SC',sans-serif]">
      <div className="h-[44px] shrink-0 bg-black" />
      <div className="h-[29px] shrink-0 bg-white flex items-center justify-end relative">
        <div className="w-[13px] h-px bg-black mr-[46px] -mt-[3px]" />
        <div className="absolute right-0 top-[10px] w-[2px] h-[10px] bg-black" />
      </div>
      <TopBar />
      <div className="h-[943px] shrink-0 flex">
        <div className="w-[1489px] shrink-0 flex flex-col">
          <Viewport />
          <Timeline />
        </div>
        <div className="ml-[3px] flex-1 min-w-0 flex flex-col">
          <Outliner />
          <Props />
        </div>
      </div>
      <StatusBar />
      <TaskStrip />
    </div>
  );
}
